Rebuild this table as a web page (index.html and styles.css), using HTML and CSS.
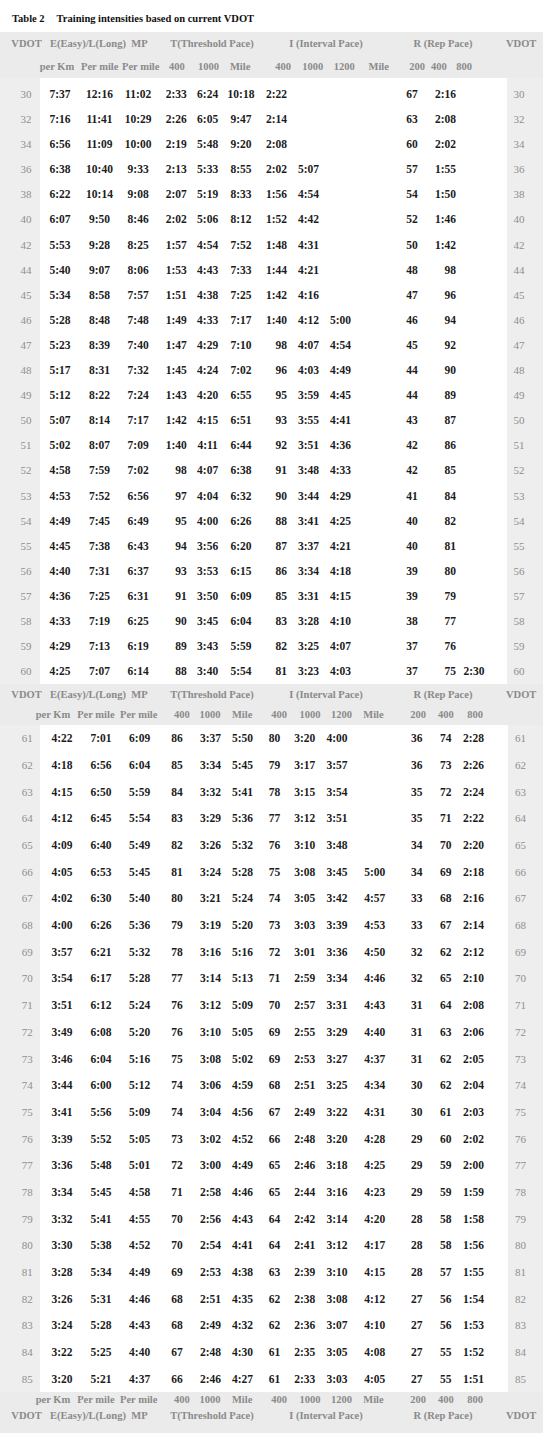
FILE: index.html
```html
<!DOCTYPE html>
<html lang="en">
<head>
<meta charset="utf-8">
<title>Training intensities based on current VDOT</title>
<link rel="stylesheet" href="styles.css">
</head>
<body>
<div class="page">
  <div class="title"><span>Table 2</span><span class="title-text">Training intensities based on current VDOT</span></div>

  <div class="hdr hdr-top">
    <div class="grp"><span>VDOT</span><span>E(Easy)/L(Long)</span><span>MP</span><span>T(Threshold Pace)</span><span>I (Interval Pace)</span><span>R (Rep Pace)</span><span>VDOT</span></div>
    <div class="sub1"><span>per Km</span><span>Per mile</span><span>Per mile</span><span>400</span><span>1000</span><span>Mile</span><span>400</span><span>1000</span><span>1200</span><span>Mile</span><span>200</span><span>400</span><span>800</span></div>
  </div>

  <div class="body1">
    <div class="row"><span class="v">30</span><span>7:37</span><span>12:16</span><span>11:02</span><span>2:33</span><span>6:24</span><span>10:18</span><span>2:22</span><span></span><span></span><span></span><span>67</span><span>2:16</span><span></span><span class="v">30</span></div>
    <div class="row"><span class="v">32</span><span>7:16</span><span>11:41</span><span>10:29</span><span>2:26</span><span>6:05</span><span>9:47</span><span>2:14</span><span></span><span></span><span></span><span>63</span><span>2:08</span><span></span><span class="v">32</span></div>
    <div class="row"><span class="v">34</span><span>6:56</span><span>11:09</span><span>10:00</span><span>2:19</span><span>5:48</span><span>9:20</span><span>2:08</span><span></span><span></span><span></span><span>60</span><span>2:02</span><span></span><span class="v">34</span></div>
    <div class="row"><span class="v">36</span><span>6:38</span><span>10:40</span><span>9:33</span><span>2:13</span><span>5:33</span><span>8:55</span><span>2:02</span><span>5:07</span><span></span><span></span><span>57</span><span>1:55</span><span></span><span class="v">36</span></div>
    <div class="row"><span class="v">38</span><span>6:22</span><span>10:14</span><span>9:08</span><span>2:07</span><span>5:19</span><span>8:33</span><span>1:56</span><span>4:54</span><span></span><span></span><span>54</span><span>1:50</span><span></span><span class="v">38</span></div>
    <div class="row"><span class="v">40</span><span>6:07</span><span>9:50</span><span>8:46</span><span>2:02</span><span>5:06</span><span>8:12</span><span>1:52</span><span>4:42</span><span></span><span></span><span>52</span><span>1:46</span><span></span><span class="v">40</span></div>
    <div class="row"><span class="v">42</span><span>5:53</span><span>9:28</span><span>8:25</span><span>1:57</span><span>4:54</span><span>7:52</span><span>1:48</span><span>4:31</span><span></span><span></span><span>50</span><span>1:42</span><span></span><span class="v">42</span></div>
    <div class="row"><span class="v">44</span><span>5:40</span><span>9:07</span><span>8:06</span><span>1:53</span><span>4:43</span><span>7:33</span><span>1:44</span><span>4:21</span><span></span><span></span><span>48</span><span>98</span><span></span><span class="v">44</span></div>
    <div class="row"><span class="v">45</span><span>5:34</span><span>8:58</span><span>7:57</span><span>1:51</span><span>4:38</span><span>7:25</span><span>1:42</span><span>4:16</span><span></span><span></span><span>47</span><span>96</span><span></span><span class="v">45</span></div>
    <div class="row"><span class="v">46</span><span>5:28</span><span>8:48</span><span>7:48</span><span>1:49</span><span>4:33</span><span>7:17</span><span>1:40</span><span>4:12</span><span>5:00</span><span></span><span>46</span><span>94</span><span></span><span class="v">46</span></div>
    <div class="row"><span class="v">47</span><span>5:23</span><span>8:39</span><span>7:40</span><span>1:47</span><span>4:29</span><span>7:10</span><span>98</span><span>4:07</span><span>4:54</span><span></span><span>45</span><span>92</span><span></span><span class="v">47</span></div>
    <div class="row"><span class="v">48</span><span>5:17</span><span>8:31</span><span>7:32</span><span>1:45</span><span>4:24</span><span>7:02</span><span>96</span><span>4:03</span><span>4:49</span><span></span><span>44</span><span>90</span><span></span><span class="v">48</span></div>
    <div class="row"><span class="v">49</span><span>5:12</span><span>8:22</span><span>7:24</span><span>1:43</span><span>4:20</span><span>6:55</span><span>95</span><span>3:59</span><span>4:45</span><span></span><span>44</span><span>89</span><span></span><span class="v">49</span></div>
    <div class="row"><span class="v">50</span><span>5:07</span><span>8:14</span><span>7:17</span><span>1:42</span><span>4:15</span><span>6:51</span><span>93</span><span>3:55</span><span>4:41</span><span></span><span>43</span><span>87</span><span></span><span class="v">50</span></div>
    <div class="row"><span class="v">51</span><span>5:02</span><span>8:07</span><span>7:09</span><span>1:40</span><span>4:11</span><span>6:44</span><span>92</span><span>3:51</span><span>4:36</span><span></span><span>42</span><span>86</span><span></span><span class="v">51</span></div>
    <div class="row"><span class="v">52</span><span>4:58</span><span>7:59</span><span>7:02</span><span>98</span><span>4:07</span><span>6:38</span><span>91</span><span>3:48</span><span>4:33</span><span></span><span>42</span><span>85</span><span></span><span class="v">52</span></div>
    <div class="row"><span class="v">53</span><span>4:53</span><span>7:52</span><span>6:56</span><span>97</span><span>4:04</span><span>6:32</span><span>90</span><span>3:44</span><span>4:29</span><span></span><span>41</span><span>84</span><span></span><span class="v">53</span></div>
    <div class="row"><span class="v">54</span><span>4:49</span><span>7:45</span><span>6:49</span><span>95</span><span>4:00</span><span>6:26</span><span>88</span><span>3:41</span><span>4:25</span><span></span><span>40</span><span>82</span><span></span><span class="v">54</span></div>
    <div class="row"><span class="v">55</span><span>4:45</span><span>7:38</span><span>6:43</span><span>94</span><span>3:56</span><span>6:20</span><span>87</span><span>3:37</span><span>4:21</span><span></span><span>40</span><span>81</span><span></span><span class="v">55</span></div>
    <div class="row"><span class="v">56</span><span>4:40</span><span>7:31</span><span>6:37</span><span>93</span><span>3:53</span><span>6:15</span><span>86</span><span>3:34</span><span>4:18</span><span></span><span>39</span><span>80</span><span></span><span class="v">56</span></div>
    <div class="row"><span class="v">57</span><span>4:36</span><span>7:25</span><span>6:31</span><span>91</span><span>3:50</span><span>6:09</span><span>85</span><span>3:31</span><span>4:15</span><span></span><span>39</span><span>79</span><span></span><span class="v">57</span></div>
    <div class="row"><span class="v">58</span><span>4:33</span><span>7:19</span><span>6:25</span><span>90</span><span>3:45</span><span>6:04</span><span>83</span><span>3:28</span><span>4:10</span><span></span><span>38</span><span>77</span><span></span><span class="v">58</span></div>
    <div class="row"><span class="v">59</span><span>4:29</span><span>7:13</span><span>6:19</span><span>89</span><span>3:43</span><span>5:59</span><span>82</span><span>3:25</span><span>4:07</span><span></span><span>37</span><span>76</span><span></span><span class="v">59</span></div>
    <div class="row"><span class="v">60</span><span>4:25</span><span>7:07</span><span>6:14</span><span>88</span><span>3:40</span><span>5:54</span><span>81</span><span>3:23</span><span>4:03</span><span></span><span>37</span><span>75</span><span>2:30</span><span class="v">60</span></div>
  </div>

  <div class="hdr hdr-mid">
    <div class="grp"><span>VDOT</span><span>E(Easy)/L(Long)</span><span>MP</span><span>T(Threshold Pace)</span><span>I (Interval Pace)</span><span>R (Rep Pace)</span><span>VDOT</span></div>
    <div class="sub2"><span>per Km</span><span>Per mile</span><span>Per mile</span><span>400</span><span>1000</span><span>Mile</span><span>400</span><span>1000</span><span>1200</span><span>Mile</span><span>200</span><span>400</span><span>800</span></div>
  </div>

  <div class="body2">
    <div class="row"><span class="v">61</span><span>4:22</span><span>7:01</span><span>6:09</span><span>86</span><span>3:37</span><span>5:50</span><span>80</span><span>3:20</span><span>4:00</span><span></span><span>36</span><span>74</span><span>2:28</span><span class="v">61</span></div>
    <div class="row"><span class="v">62</span><span>4:18</span><span>6:56</span><span>6:04</span><span>85</span><span>3:34</span><span>5:45</span><span>79</span><span>3:17</span><span>3:57</span><span></span><span>36</span><span>73</span><span>2:26</span><span class="v">62</span></div>
    <div class="row"><span class="v">63</span><span>4:15</span><span>6:50</span><span>5:59</span><span>84</span><span>3:32</span><span>5:41</span><span>78</span><span>3:15</span><span>3:54</span><span></span><span>35</span><span>72</span><span>2:24</span><span class="v">63</span></div>
    <div class="row"><span class="v">64</span><span>4:12</span><span>6:45</span><span>5:54</span><span>83</span><span>3:29</span><span>5:36</span><span>77</span><span>3:12</span><span>3:51</span><span></span><span>35</span><span>71</span><span>2:22</span><span class="v">64</span></div>
    <div class="row"><span class="v">65</span><span>4:09</span><span>6:40</span><span>5:49</span><span>82</span><span>3:26</span><span>5:32</span><span>76</span><span>3:10</span><span>3:48</span><span></span><span>34</span><span>70</span><span>2:20</span><span class="v">65</span></div>
    <div class="row"><span class="v">66</span><span>4:05</span><span>6:53</span><span>5:45</span><span>81</span><span>3:24</span><span>5:28</span><span>75</span><span>3:08</span><span>3:45</span><span>5:00</span><span>34</span><span>69</span><span>2:18</span><span class="v">66</span></div>
    <div class="row"><span class="v">67</span><span>4:02</span><span>6:30</span><span>5:40</span><span>80</span><span>3:21</span><span>5:24</span><span>74</span><span>3:05</span><span>3:42</span><span>4:57</span><span>33</span><span>68</span><span>2:16</span><span class="v">67</span></div>
    <div class="row"><span class="v">68</span><span>4:00</span><span>6:26</span><span>5:36</span><span>79</span><span>3:19</span><span>5:20</span><span>73</span><span>3:03</span><span>3:39</span><span>4:53</span><span>33</span><span>67</span><span>2:14</span><span class="v">68</span></div>
    <div class="row"><span class="v">69</span><span>3:57</span><span>6:21</span><span>5:32</span><span>78</span><span>3:16</span><span>5:16</span><span>72</span><span>3:01</span><span>3:36</span><span>4:50</span><span>32</span><span>62</span><span>2:12</span><span class="v">69</span></div>
    <div class="row"><span class="v">70</span><span>3:54</span><span>6:17</span><span>5:28</span><span>77</span><span>3:14</span><span>5:13</span><span>71</span><span>2:59</span><span>3:34</span><span>4:46</span><span>32</span><span>65</span><span>2:10</span><span class="v">70</span></div>
    <div class="row"><span class="v">71</span><span>3:51</span><span>6:12</span><span>5:24</span><span>76</span><span>3:12</span><span>5:09</span><span>70</span><span>2:57</span><span>3:31</span><span>4:43</span><span>31</span><span>64</span><span>2:08</span><span class="v">71</span></div>
    <div class="row"><span class="v">72</span><span>3:49</span><span>6:08</span><span>5:20</span><span>76</span><span>3:10</span><span>5:05</span><span>69</span><span>2:55</span><span>3:29</span><span>4:40</span><span>31</span><span>63</span><span>2:06</span><span class="v">72</span></div>
    <div class="row"><span class="v">73</span><span>3:46</span><span>6:04</span><span>5:16</span><span>75</span><span>3:08</span><span>5:02</span><span>69</span><span>2:53</span><span>3:27</span><span>4:37</span><span>31</span><span>62</span><span>2:05</span><span class="v">73</span></div>
    <div class="row"><span class="v">74</span><span>3:44</span><span>6:00</span><span>5:12</span><span>74</span><span>3:06</span><span>4:59</span><span>68</span><span>2:51</span><span>3:25</span><span>4:34</span><span>30</span><span>62</span><span>2:04</span><span class="v">74</span></div>
    <div class="row"><span class="v">75</span><span>3:41</span><span>5:56</span><span>5:09</span><span>74</span><span>3:04</span><span>4:56</span><span>67</span><span>2:49</span><span>3:22</span><span>4:31</span><span>30</span><span>61</span><span>2:03</span><span class="v">75</span></div>
    <div class="row"><span class="v">76</span><span>3:39</span><span>5:52</span><span>5:05</span><span>73</span><span>3:02</span><span>4:52</span><span>66</span><span>2:48</span><span>3:20</span><span>4:28</span><span>29</span><span>60</span><span>2:02</span><span class="v">76</span></div>
    <div class="row"><span class="v">77</span><span>3:36</span><span>5:48</span><span>5:01</span><span>72</span><span>3:00</span><span>4:49</span><span>65</span><span>2:46</span><span>3:18</span><span>4:25</span><span>29</span><span>59</span><span>2:00</span><span class="v">77</span></div>
    <div class="row"><span class="v">78</span><span>3:34</span><span>5:45</span><span>4:58</span><span>71</span><span>2:58</span><span>4:46</span><span>65</span><span>2:44</span><span>3:16</span><span>4:23</span><span>29</span><span>59</span><span>1:59</span><span class="v">78</span></div>
    <div class="row"><span class="v">79</span><span>3:32</span><span>5:41</span><span>4:55</span><span>70</span><span>2:56</span><span>4:43</span><span>64</span><span>2:42</span><span>3:14</span><span>4:20</span><span>28</span><span>58</span><span>1:58</span><span class="v">79</span></div>
    <div class="row"><span class="v">80</span><span>3:30</span><span>5:38</span><span>4:52</span><span>70</span><span>2:54</span><span>4:41</span><span>64</span><span>2:41</span><span>3:12</span><span>4:17</span><span>28</span><span>58</span><span>1:56</span><span class="v">80</span></div>
    <div class="row"><span class="v">81</span><span>3:28</span><span>5:34</span><span>4:49</span><span>69</span><span>2:53</span><span>4:38</span><span>63</span><span>2:39</span><span>3:10</span><span>4:15</span><span>28</span><span>57</span><span>1:55</span><span class="v">81</span></div>
    <div class="row"><span class="v">82</span><span>3:26</span><span>5:31</span><span>4:46</span><span>68</span><span>2:51</span><span>4:35</span><span>62</span><span>2:38</span><span>3:08</span><span>4:12</span><span>27</span><span>56</span><span>1:54</span><span class="v">82</span></div>
    <div class="row"><span class="v">83</span><span>3:24</span><span>5:28</span><span>4:43</span><span>68</span><span>2:49</span><span>4:32</span><span>62</span><span>2:36</span><span>3:07</span><span>4:10</span><span>27</span><span>56</span><span>1:53</span><span class="v">83</span></div>
    <div class="row"><span class="v">84</span><span>3:22</span><span>5:25</span><span>4:40</span><span>67</span><span>2:48</span><span>4:30</span><span>61</span><span>2:35</span><span>3:05</span><span>4:08</span><span>27</span><span>55</span><span>1:52</span><span class="v">84</span></div>
    <div class="row"><span class="v">85</span><span>3:20</span><span>5:21</span><span>4:37</span><span>66</span><span>2:46</span><span>4:27</span><span>61</span><span>2:33</span><span>3:03</span><span>4:05</span><span>27</span><span>55</span><span>1:51</span><span class="v">85</span></div>
  </div>

  <div class="hdr hdr-bottom">
    <div class="sub2"><span>per Km</span><span>Per mile</span><span>Per mile</span><span>400</span><span>1000</span><span>Mile</span><span>400</span><span>1000</span><span>1200</span><span>Mile</span><span>200</span><span>400</span><span>800</span></div>
    <div class="grp"><span>VDOT</span><span>E(Easy)/L(Long)</span><span>MP</span><span>T(Threshold Pace)</span><span>I (Interval Pace)</span><span>R (Rep Pace)</span><span>VDOT</span></div>
  </div>
</div>
</body>
</html>
```

FILE: styles.css
```css
html, body {
  margin: 0;
  padding: 0;
  background: #ffffff;
}

.page {
  width: 543px;
  font-family: "Liberation Serif", "Times New Roman", serif;
  color: #1c1c1c;
}

/* Title */
.title {
  height: 26px;
  padding: 6px 0 0 12px;
  line-height: 26px;
  font-size: 10.5px;
  font-weight: bold;
  color: #111;
  white-space: nowrap;
}
.title-text {
  margin-left: 12px;
}

/* Header bands */
.hdr {
  background: #ebebeb;
  color: #8a8a8a;
  font-weight: bold;
  font-size: 10.5px;
  white-space: nowrap;
}

.grp {
  display: grid;
  grid-template-columns: 45px 78px 25px 120px 108px 126px 29px;
  padding: 0 8px 0 4px;
  text-align: center;
}

.sub1 {
  display: grid;
  grid-template-columns: 43px 42.5px 39.5px 32.75px 30.5px 37.75px 36px 30.5px 32.5px 36.5px 30px 23.5px 27px;
  padding-left: 35.5px;
  text-align: center;
}
.sub1 > :nth-child(6) { padding-right: 5px; }
.sub1 > :nth-child(7) { padding-left: 7px; }
.sub1 > :nth-child(11) { padding-left: 10px; }

.sub2 {
  display: grid;
  grid-template-columns: 43px 42.75px 43px 35px 29.25px 35.25px 34.75px 31px 31.75px 38.5px 35.75px 28.5px 30px;
  padding-left: 31.5px;
  text-align: center;
}
.sub2 > :nth-child(4) { padding-left: 8px; }
.sub2 > :nth-child(7) { padding-left: 4px; }
.sub2 > :nth-child(10) { padding-right: 6px; }
.sub2 > :nth-child(11) { padding-left: 9px; }

.hdr-top .grp { height: 24px; line-height: 24px; }
.hdr-top .sub1 { height: 22px; line-height: 22px; }

.hdr-mid .grp { height: 21px; line-height: 21px; }
.hdr-mid .sub2 { height: 20px; line-height: 20px; }

.hdr-bottom { padding-bottom: 9px; }
.hdr-bottom .sub2 { height: 16px; line-height: 16px; }
.hdr-bottom .grp { height: 16px; line-height: 16px; }

/* Table bodies: grey VDOT strips on both sides */
.body1,
.body2 {
  font-size: 11.5px;
  font-weight: bold;
  white-space: nowrap;
}

.body1 {
  padding-top: 4px;
  background: linear-gradient(to right, #eeeeee 0, #eeeeee 40px, #ffffff 40px, #ffffff 507px, #eeeeee 507px);
}

.body2 {
  background: linear-gradient(to right, #eeeeee 0, #eeeeee 40px, #ffffff 40px, #ffffff 508px, #eeeeee 508px);
}

.row {
  display: grid;
  text-align: center;
}

.body1 .row {
  grid-template-columns: 40px 40px 39px 38.25px 34.5px 31.75px 35px 34.5px 31px 33px 37.5px 35px 30px 29px 18.5px 36px;
  height: 25.1px;
  line-height: 25.1px;
}

.body2 .row {
  grid-template-columns: 42.25px 39.5px 38.5px 38.75px 36px 31px 33px 31px 29.5px 35px 40.5px 36.5px 28.25px 27.5px 20.75px 35px;
  height: 26.7px;
  line-height: 26.7px;
}

.row > .v {
  font-weight: normal;
  font-size: 11px;
  color: #8e8e8e;
}
.row > .v:first-child { padding-left: 12px; }
.row > .v:last-child {
  grid-column: 16;
  padding-right: 12px;
}
.body2 .row > .v:last-child { padding-right: 10px; }

/* columns whose values are aligned on the right in the printed table */
.body1 .row > :nth-child(5) { text-align: right; padding-right: 5px; }
.body1 .row > :nth-child(8) { text-align: right; padding-right: 6px; }
.body1 .row > :nth-child(13) { text-align: right; padding-right: 3.5px; }

.body2 .row > :nth-child(12) { padding-left: 7px; }
```
